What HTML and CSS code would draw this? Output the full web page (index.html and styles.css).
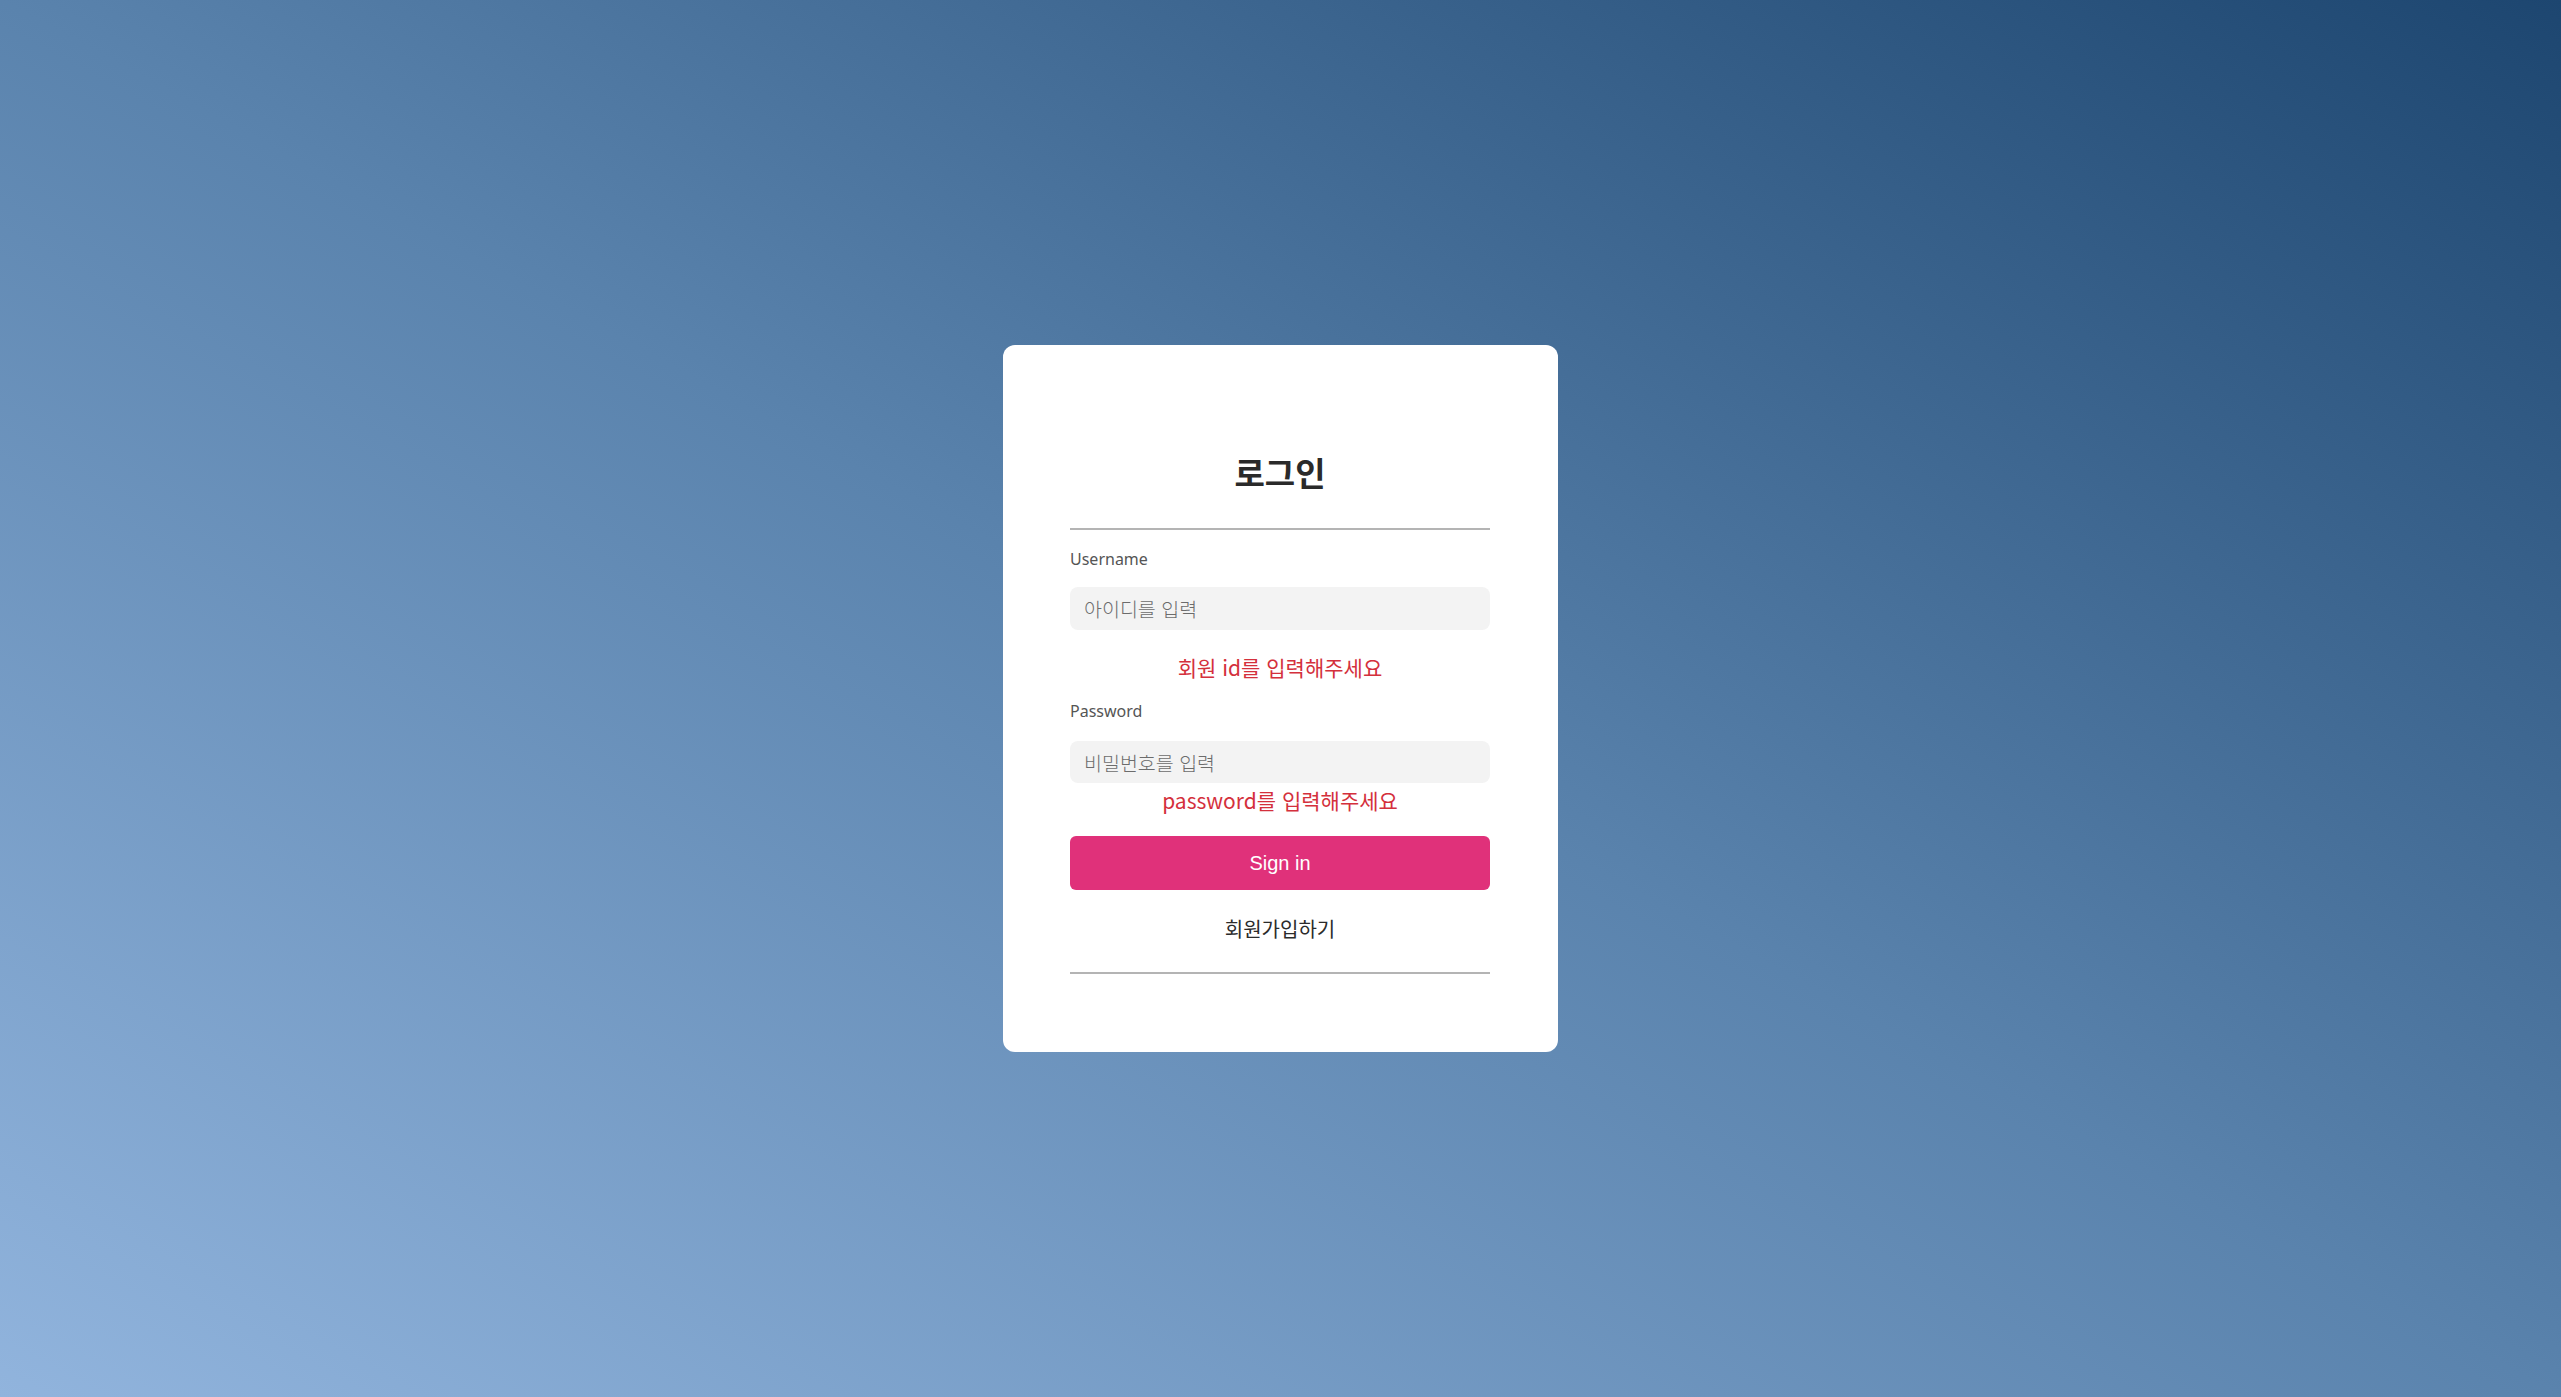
FILE: index.html
```html
<!DOCTYPE html>
<html lang="ko">
<head>
<meta charset="utf-8">
<title>로그인</title>
<link rel="stylesheet" href="styles.css">
</head>
<body>
<main class="page">
  <form class="card" onsubmit="return false">
    <h1 class="title">로그인</h1>
    <hr class="rule rule-top">
    <label class="label" for="username">Username</label>
    <input class="field field-user" id="username" type="text" placeholder="아이디를 입력">
    <p class="error error-user">회원 id를 입력해주세요</p>
    <label class="label" for="password">Password</label>
    <input class="field field-pass" id="password" type="password" placeholder="비밀번호를 입력">
    <p class="error error-pass">password를 입력해주세요</p>
    <button class="submit" type="submit">Sign in</button>
    <a class="signup" href="#">회원가입하기</a>
    <hr class="rule rule-bottom">
  </form>
</main>
</body>
</html>
```

FILE: styles.css
```css
* { box-sizing: border-box; }

html, body {
  margin: 0;
  padding: 0;
  height: 100%;
}

body {
  font-family: "Noto Sans", "Noto Sans CJK KR", sans-serif;
  background: linear-gradient(to top right, #91b4dd 0%, #5a83ad 50%, #1d4670 100%);
}

.page {
  min-height: 100vh;
  display: flex;
  align-items: center;
  justify-content: center;
}

.card {
  width: 555px;
  background: #ffffff;
  border-radius: 12px;
  padding: 102px 68px 78px 67px;
  display: flex;
  flex-direction: column;
}

.title {
  margin: 0;
  height: 50px;
  line-height: 50px;
  text-align: center;
  font-family: "Noto Sans CJK KR", sans-serif;
  font-size: 33px;
  font-weight: 700;
  color: #2a2a2a;
}

.rule {
  margin: 0;
  height: 0;
  border: 0;
  border-top: 2px solid #b4b4b4;
}

.rule-top { margin-top: 31px; }
.rule-bottom { margin-top: 28px; }

.label {
  margin-top: 17px;
  height: 24px;
  line-height: 24px;
  font-size: 16px;
  color: #555555;
}

.field {
  height: 43px;
  border: 0;
  border-radius: 8px;
  background: #f3f3f3;
  padding: 0 14px;
  font-family: "Noto Sans CJK KR", sans-serif;
  font-size: 19.5px;
  font-weight: 300;
  color: #333;
  outline: none;
}

.field::placeholder { color: #6c6c6c; }

.field-user { margin-top: 16px; }
.field-pass { margin-top: 18px; height: 42px; }

.error {
  margin: 0;
  height: 30px;
  line-height: 30px;
  text-align: center;
  font-family: "Noto Sans CJK KR", sans-serif;
  font-size: 21px;
  color: #d4303c;
}

.error-user { margin-top: 22px; }
.error-pass { margin-top: 2px; }

.submit {
  margin-top: 21px;
  height: 54px;
  border: 0;
  border-radius: 6px;
  background: #e0317a;
  color: #ffffff;
  font-family: "Liberation Sans", Arial, sans-serif;
  font-size: 20px;
  cursor: pointer;
}

.signup {
  margin-top: 24px;
  height: 30px;
  line-height: 30px;
  text-align: center;
  font-family: "Noto Sans CJK KR", sans-serif;
  font-size: 20px;
  font-weight: 400;
  color: #2b2b2b;
  text-decoration: none;
}
```
